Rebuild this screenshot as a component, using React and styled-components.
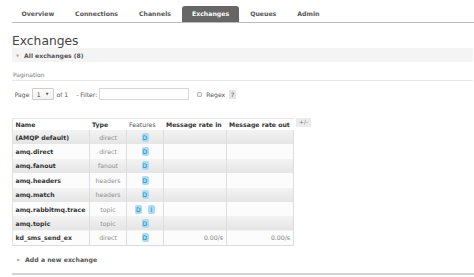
import React from 'react';
import styled, { createGlobalStyle } from 'styled-components';

const GlobalStyle = createGlobalStyle`
    html, body {
        margin: 0;
        padding: 0;
        background: #fff;
    }
    body {
        font-family: "DejaVu Sans", Verdana, sans-serif;
        color: #444;
    }
`;

const tabs = ['Overview', 'Connections', 'Channels', 'Exchanges', 'Queues', 'Admin'];

const exchanges = [
    { name: '(AMQP default)', type: 'direct', features: ['D'] },
    { name: 'amq.direct', type: 'direct', features: ['D'] },
    { name: 'amq.fanout', type: 'fanout', features: ['D'] },
    { name: 'amq.headers', type: 'headers', features: ['D'] },
    { name: 'amq.match', type: 'headers', features: ['D'] },
    { name: 'amq.rabbitmq.trace', type: 'topic', features: ['D', 'I'] },
    { name: 'amq.topic', type: 'topic', features: ['D'] },
    { name: 'kd_sms_send_ex', type: 'direct', features: ['D'], rateIn: '0.00/s', rateOut: '0.00/s' },
];

function App() {
    return (
        <Page>
            <GlobalStyle />
            <TabBar>
                {tabs.map(t => (
                    <Tab key={t} $active={t === 'Exchanges'}>{t}</Tab>
                ))}
            </TabBar>

            <Heading>Exchanges</Heading>

            <SectionBar>
                <Arrow>▼</Arrow>
                All exchanges (8)
            </SectionBar>

            <Pagination>Pagination</Pagination>

            <Controls>
                <Label $ml={2.7}>Page</Label>
                <Select $ml={2.3}>
                    <span>1</span>
                    <Caret>▼</Caret>
                </Select>
                <Label $ml={2.7}>of 1</Label>
                <Label $ml={8}>- Filter:</Label>
                <FilterInput />
                <Checkbox />
                <Label $ml={4}>Regex</Label>
                <Help>?</Help>
            </Controls>

            <TableWrap>
                <Table>
                    <colgroup>
                        <col style={{ width: 77 }} />
                        <col style={{ width: 37 }} />
                        <col style={{ width: 37 }} />
                        <col style={{ width: 63 }} />
                        <col style={{ width: 67 }} />
                    </colgroup>
                    <thead>
                        <tr>
                            <Th>Name</Th>
                            <Th>Type</Th>
                            <Th $light>Features</Th>
                            <Th>Message rate in</Th>
                            <Th>Message rate out</Th>
                        </tr>
                    </thead>
                    <tbody>
                        {exchanges.map((ex, i) => (
                            <Row key={ex.name} $alt={i % 2 === 0}>
                                <NameCell>{ex.name}</NameCell>
                                <TypeCell>{ex.type}</TypeCell>
                                <FeatureCell>
                                    {ex.features.map(f => <Badge key={f}>{f}</Badge>)}
                                </FeatureCell>
                                <RateCell>{ex.rateIn}</RateCell>
                                <RateCell>{ex.rateOut}</RateCell>
                            </Row>
                        ))}
                    </tbody>
                </Table>
                <Toggle>+/-</Toggle>
            </TableWrap>

            <AddRow>
                <Arrow>▶</Arrow>
                Add a new exchange
            </AddRow>
            <Divider />
        </Page>
    );
}

export default App;

const Page = styled.div`
    padding: 0 0 0 12px;
    width: 474px;
    box-sizing: border-box;
`;

const TabBar = styled.div`
    display: flex;
    gap: 2px;
    padding-top: 6px;
    border-bottom: 1px solid #bbb;
`;

const Tab = styled.div`
    height: 16px;
    line-height: 16px;
    padding: 0 9.5px;
    font-size: 6.2px;
    font-weight: bold;
    color: ${p => (p.$active ? '#fff' : '#555')};
    background: ${p => (p.$active ? '#666' : 'transparent')};
    border-radius: 3px 3px 0 0;
`;

const Heading = styled.h1`
    margin: 12px 0 0;
    font-size: 12.3px;
    line-height: 13px;
    font-weight: normal;
    color: #444;
`;

const SectionBar = styled.div`
    display: flex;
    align-items: center;
    height: 14px;
    margin-right: 1px;
    padding-left: 4px;
    background: #f4f4f4;
    font-size: 6.1px;
    font-weight: bold;
    color: #555;
`;

const Arrow = styled.span`
    font-size: 4px;
    color: #aaa;
    margin-right: 5px;
`;

const Pagination = styled.div`
    margin: 9px 1px 0 0;
    padding: 0 0 1px 1px;
    height: 8px;
    line-height: 8px;
    font-size: 6px;
    color: #777;
    border-bottom: 1px solid #e6e6e6;
`;

const Controls = styled.div`
    display: flex;
    align-items: center;
    height: 12px;
    margin-top: 7px;
`;

const Label = styled.span`
    margin-left: ${p => p.$ml || 0}px;
    font-size: 6.1px;
    color: #555;
    white-space: nowrap;
`;

const Select = styled.div`
    display: flex;
    align-items: center;
    gap: 5px;
    box-sizing: border-box;
    width: 22px;
    height: 12px;
    margin-left: ${p => p.$ml || 0}px;
    padding-left: 4px;
    border: 1px solid #ccc;
    border-radius: 1px;
    background: linear-gradient(#fff, #f2f2f2);
    font-size: 6.1px;
    color: #444;
`;

const Caret = styled.span`
    font-size: 3.5px;
    color: #555;
`;

const FilterInput = styled.div`
    box-sizing: border-box;
    width: 90px;
    height: 12px;
    margin-left: 2px;
    border: 1px solid #d8d8d8;
    background: #fff;
`;

const Checkbox = styled.span`
    box-sizing: border-box;
    width: 5px;
    height: 5px;
    margin-left: 8px;
    border: 1px solid #bbb;
    border-radius: 1px;
    background: #eee;
`;

const Help = styled.span`
    margin-left: 4px;
    width: 7px;
    height: 9px;
    line-height: 9px;
    text-align: center;
    background: #e4e4e4;
    font-size: 6px;
    color: #555;
`;

const TableWrap = styled.div`
    display: flex;
    align-items: flex-start;
    gap: 2px;
    margin-top: 18px;
`;

const Table = styled.table`
    table-layout: fixed;
    border-collapse: collapse;
    width: 281px;
    font-size: 6.2px;
    border-left: 1px solid #e2e2e2;
    border-bottom: 1px solid #dcdcdc;
`;

const Th = styled.th`
    height: 11px;
    padding: 0 2.5px;
    text-align: left;
    font-weight: ${p => (p.$light ? 'normal' : 'bold')};
    color: ${p => (p.$light ? '#555' : '#333')};
    white-space: nowrap;
    border-top: 1px solid #e6e6e6;
    background: #fff;
`;

const Row = styled.tr`
    height: 14.4px;
    background: ${p => (p.$alt ? 'linear-gradient(#f3f3f3, #e5e5e5)' : '#fcfcfc')};
`;

const Cell = styled.td`
    padding: 0 2.5px;
    border-right: 1px solid #dedede;
    white-space: nowrap;
    vertical-align: middle;
`;

const NameCell = styled(Cell)`
    font-weight: bold;
    color: #333;
`;

const TypeCell = styled(Cell)`
    text-align: center;
    color: #8c8c8c;
`;

const FeatureCell = styled(Cell)`
    text-align: center;
`;

const RateCell = styled(Cell)`
    text-align: right;
    padding-right: 3px;
    color: #808080;
`;

const Badge = styled.span`
    display: inline-block;
    width: 7px;
    height: 9px;
    line-height: 9px;
    margin: 0 3px;
    border-radius: 2px;
    background: #a9ddf3;
    color: #2a7fb4;
    font-size: 6.2px;
    text-align: center;
    vertical-align: middle;
`;

const Toggle = styled.div`
    width: 15px;
    height: 9px;
    line-height: 9px;
    text-align: center;
    background: #ececec;
    font-size: 5.8px;
    color: #777;
`;

const AddRow = styled.div`
    display: flex;
    align-items: center;
    height: 8px;
    margin-top: 10px;
    padding-left: 5px;
    font-size: 6.2px;
    font-weight: bold;
    color: #555;
`;

const Divider = styled.div`
    margin-top: 9px;
    height: 2px;
    background: #d2d2d2;
`;
